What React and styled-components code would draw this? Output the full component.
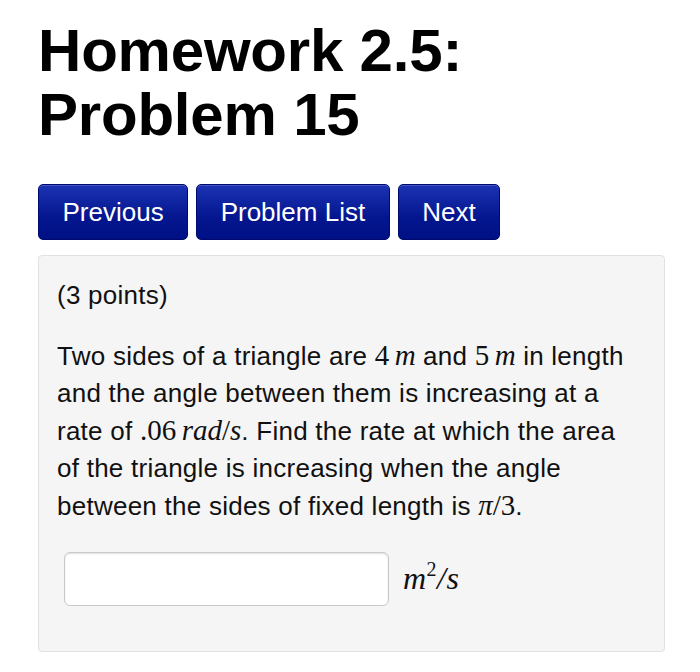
import React from 'react';
import styled, { createGlobalStyle } from 'styled-components';

const GlobalStyle = createGlobalStyle`
  body {
    margin: 0;
    background: #ffffff;
    font-family: "Liberation Sans", Arial, Helvetica, sans-serif;
    color: #111111;
  }
`;

const Page = styled.div`
  padding: 19px 35px 0 38px;
`;

const Title = styled.h1`
  margin: 0;
  font-size: 60px;
  line-height: 64px;
  font-weight: 700;
  color: #000;
  letter-spacing: -0.2px;
`;

const Nav = styled.div`
  display: flex;
  gap: 8px;
  margin-top: 37px;
`;

const NavButton = styled.button`
  height: 56px;
  padding: 0 23.5px;
  border: 1px solid #000a6e;
  border-radius: 5px;
  background: linear-gradient(#1c33b3, #04168f 60%, #001085);
  color: #ffffff;
  font-family: "Liberation Sans", Arial, sans-serif;
  font-size: 26px;
  box-shadow: inset 0 1px 0 rgba(255, 255, 255, 0.18);
  cursor: pointer;
`;

const Panel = styled.div`
  margin-top: 15px;
  background: #f5f5f5;
  border: 1px solid #e1e1e1;
  border-radius: 4px;
  padding: 21px 19px 45px 18px;
  font-size: 26px;
  line-height: 37.5px;
  letter-spacing: 0.25px;
  color: #111;
`;

const Points = styled.p`
  margin: 0 0 23px;
`;

const Statement = styled.p`
  margin: 0;
`;

const M = styled.span`
  font-family: "Liberation Serif", "Times New Roman", serif;
  font-size: 29px;
  line-height: 1;
  letter-spacing: 0;
  font-style: ${(p) => (p.$upright ? 'normal' : 'italic')};
`;

const AnswerRow = styled.div`
  display: flex;
  align-items: center;
  gap: 14px;
  margin-top: 27px;
  padding-left: 7px;
`;

const AnswerInput = styled.input`
  width: 325px;
  height: 54px;
  box-sizing: border-box;
  border: 1px solid #c9c9c9;
  border-radius: 6px;
  background: #fff;
  box-shadow: inset 0 1px 2px rgba(0, 0, 0, 0.12);
  font-size: 20px;
  padding: 0 10px;
  outline: none;
`;

const Unit = styled.span`
  font-family: "Liberation Serif", "Times New Roman", serif;
  font-style: italic;
  font-size: 32px;
  letter-spacing: 0.5px;
  sup {
    font-style: normal;
    font-size: 20px;
    vertical-align: 13px;
    line-height: 0;
  }
`;

export default function App() {
  return (
    <>
      <GlobalStyle />
      <Page>
        <Title>
          Homework 2.5:
          <br />
          Problem 15
        </Title>
        <Nav>
          <NavButton>Previous</NavButton>
          <NavButton>Problem List</NavButton>
          <NavButton>Next</NavButton>
        </Nav>
        <Panel>
          <Points>(3 points)</Points>
          <Statement>
            Two sides of a triangle are <M $upright>4</M>&thinsp;<M>m</M> and{' '}
            <M $upright>5</M>&thinsp;<M>m</M> in length
            <br />
            and the angle between them is increasing at a
            <br />
            rate of <M $upright>.06</M>&thinsp;<M>rad</M>
            <M $upright>/</M>
            <M>s</M>. Find the rate at which the area
            <br />
            of the triangle is increasing when the angle
            <br />
            between the sides of fixed length is <M>π</M>
            <M $upright>/3</M>.
          </Statement>
          <AnswerRow>
            <AnswerInput type="text" />
            <Unit>
              m<sup>2</sup>/s
            </Unit>
          </AnswerRow>
        </Panel>
      </Page>
    </>
  );
}
